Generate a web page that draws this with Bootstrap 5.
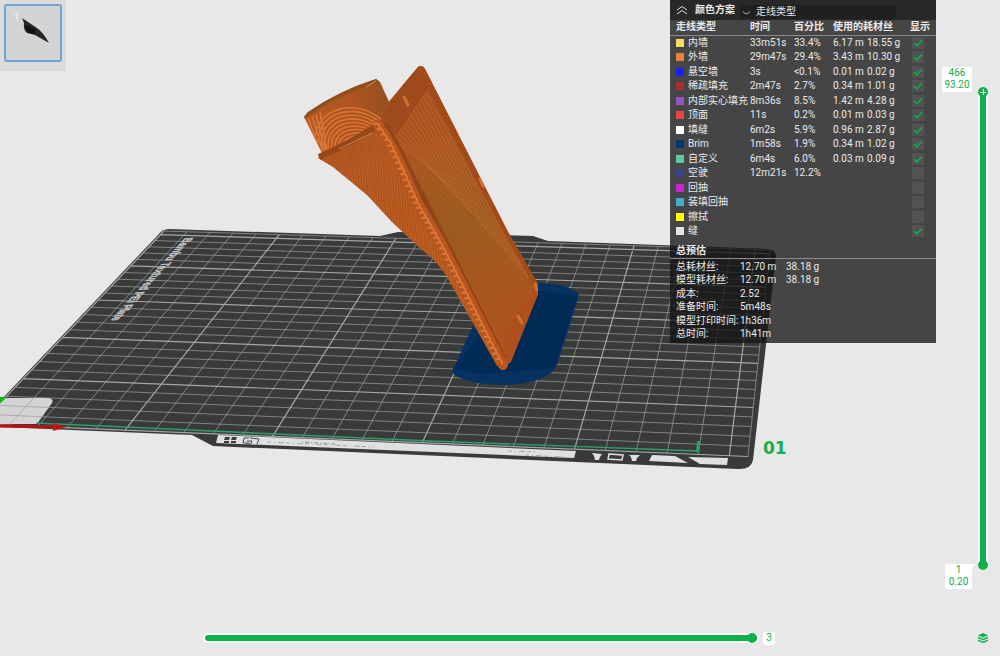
<!DOCTYPE html>
<html lang="zh-CN">
<head>
<meta charset="utf-8">
<meta name="viewport" content="width=device-width, initial-scale=1">
<title>切片预览</title>
<link href="https://cdn.jsdelivr.net/npm/bootstrap@5.3.0/dist/css/bootstrap.min.css" rel="stylesheet">
<style>
  :root { --accent: #0faf4b; }
  body { font-family: Roboto, "Noto Sans CJK SC", sans-serif; font-size: 10px; line-height: 12px; background: #e8e8e8; }
  .scene { z-index: 0; }
  .workspace { display: grid; grid-template-columns: 1fr 266px 64px; grid-template-rows: 1fr 36px; min-height: 100vh; position: relative; z-index: 1; }

  .plate-list { background: #dbdbdb; width: 66px; height: 71px; padding: 4px; }
  .plate-btn { width: 58px; height: 58px; border: 2px solid #6ca4d8; border-radius: 3px; background: #d4d4d4; padding: 0; }
  .plate-no { top: 6px; left: 8px; color: #f4f4f4; font-size: 10px; line-height: 12px; }

  .legend { background: rgba(20,20,20,.77); color: #ebebeb; align-self: start; padding-bottom: 3px; }
  .legend-head { background: rgba(22,22,22,.6); height: 20px; padding: 2px 0 0 6px; }
  .fold-btn { width: 12px; height: 16px; color: #ddd; }
  .scheme-label { margin: 0 5px 0 7px; line-height: 16px; }
  .scheme-select { width: 156px; height: 14px; padding: 0 0 0 16px; border: 0; border-radius: 0; color: #e6e6e6; font-size: 10px; line-height: 14px; margin-top: 3px;
    background: #202020 url("data:image/svg+xml,%3Csvg xmlns='http://www.w3.org/2000/svg' viewBox='0 0 10 6'%3E%3Cpath d='M1 1.5Q5 6 9 1.5' fill='none' stroke='%23ccc'/%3E%3C/svg%3E") 2px 5px / 9px 6px no-repeat; }
  .legend table { table-layout: fixed; width: 100%; margin: 0; border-collapse: collapse; }
  .legend th, .legend td { padding: 0; white-space: nowrap; vertical-align: middle; }
  .types thead tr { height: 15px; border-bottom: 1px solid #8b8b8b; }
  .types tbody tr { height: 15px; line-height: 14px; }
  .types tbody tr:nth-child(even) { height: 14px; }
  .legend tr > :first-child { padding-left: 6px; }
  .legend tbody th { font-weight: 400; }
  .swatch { width: 8px; height: 8px; margin-right: 4px; flex: none; }
  .show-box { appearance: none; display: block; width: 12px; height: 12px; margin: 0 0 0 2px; background: #525252; }
  .show-box:checked { background: #525252 url("data:image/svg+xml,%3Csvg xmlns='http://www.w3.org/2000/svg' viewBox='0 0 12 12'%3E%3Cpath d='M2 6.2 4.8 8.8 10 3.4' fill='none' stroke='%2316a54a' stroke-width='1.8'/%3E%3C/svg%3E"); }
  .totals-title { font-size: 10px; line-height: 14px; height: 15px; margin: 6px 0 0; padding-left: 6px; border-bottom: 1px solid #8b8b8b; }
  .totals tr { height: 14px; line-height: 13px; }
  .totals tr:nth-child(even) { height: 13px; }

  .layers { padding: 67px 12px 31px 6px; }
  .layer-tag { background: #fff; border-radius: 2px; color: var(--accent); width: 30px; height: 25px; position: relative; }
  .layer-tag.low { width: 27px; }
  .layer-tag.low::after { content: ""; position: absolute; left: 26px; top: 0; border-top: 5px solid #fff; border-right: 4px solid transparent; }
  .layer-rail { width: 10px; margin: 20px 0 19px; background: #fff; border-radius: 5px; }
  .layer-rail::before { content: ""; position: absolute; inset: 4px 2px; background: var(--accent); }
  .layer-rail input { appearance: none; writing-mode: vertical-lr; direction: rtl; position: absolute; inset: 0; width: 10px; height: 100%; margin: 0; background: none; pointer-events: none; }
  .layer-rail input::-webkit-slider-thumb, .step-range::-webkit-slider-thumb { -webkit-appearance: none; width: 10px; height: 10px; border: 0; border-radius: 50%; background: var(--accent); pointer-events: auto; }
  .layer-rail input.top-end::-webkit-slider-thumb { background: linear-gradient(#fff,#fff) center / 6px 1px no-repeat, linear-gradient(#fff,#fff) center / 1px 6px no-repeat, var(--accent); }

  .steps { grid-column: 1 / 3; grid-row: 2; margin: 0 161px 0 203px; }
  .step-range { appearance: none; height: 10px; border-radius: 5px; background: var(--accent); border: 2px solid #fff; min-width: 0; }
  .step-tag { background: #fff; color: var(--accent); width: 12px; height: 13px; border-radius: 2px; margin-left: 4px; }
  .layers-btn { color: var(--accent); grid-column: 3; margin-right: 12px; }
</style>
</head>
<body>
<main class="position-relative min-vh-100 overflow-hidden">
  <svg class="scene position-absolute top-0 start-0 w-100 h-100" viewBox="0 0 1000 656" preserveAspectRatio="xMidYMid slice" role="img" aria-label="模型预览">
    <defs>
      <linearGradient id="face" x1="400" y1="100" x2="510" y2="350" gradientUnits="userSpaceOnUse">
        <stop offset="0" stop-color="#a9501f"/><stop offset=".25" stop-color="#a85720"/><stop offset=".5" stop-color="#9b5a1f"/><stop offset=".75" stop-color="#a8581f"/><stop offset="1" stop-color="#b0521f"/>
      </linearGradient>
      <linearGradient id="wing" x1="320" y1="150" x2="470" y2="300" gradientUnits="userSpaceOnUse">
        <stop offset="0" stop-color="#b95a22"/><stop offset="1" stop-color="#c56122"/>
      </linearGradient>
      <linearGradient id="tube" x1="305" y1="120" x2="388" y2="110" gradientUnits="userSpaceOnUse">
        <stop offset="0" stop-color="#b55a22"/><stop offset=".6" stop-color="#ad5420"/><stop offset="1" stop-color="#96511f"/>
      </linearGradient>
      <clipPath id="tubeClip"><path d="M304 117 308 112Q338 91 376 79L380 82 390 104 388 125 345 150 322 153Z"/></clipPath>
      <clipPath id="wingClip"><path d="M318 158 322 152Q352 139 378 122L392 140 448 247 500 362 497 366 477 330 461 302 447 277Q438 262 422 250L393 223 367 195 333 167Z"/></clipPath>
      <clipPath id="faceClip"><path d="M386 105 418 67Q422 64 425 69L507 230 538 284V294L511 362 503 367 448 247 392 137 380 124Z"/></clipPath>
    </defs>
    <path fill="#393b3b" d="M0 401 158 235Q162 229 169 229L380 236 398 232 533 236 548 241 768 249Q776 250 776 256L753 460Q751 470 737 469L213 446 192 435 0 427Z"/>
    <path fill="#d3d4d4" d="M-2 398H49Q54 399 52 403L37 424H-2Z"/>
    <path id="gridFine" fill="none" stroke="#9c9e9e" stroke-width=".9" opacity=".8"/>
    <path id="gridBold" fill="none" stroke="#b0b2b2" stroke-width="1.2" opacity=".9"/>
    <text transform="translate(185 238) rotate(132) skewX(45)" font-family="Liberation Sans Narrow, Liberation Sans, sans-serif" font-size="9" font-weight="700" fill="#c2c3c3" stroke="#c2c3c3" stroke-width=".4">Bambu Textured PEI Plate</text>
    <path fill="#dfe1e1" d="M218 435 576 451 574 458 216 443Z"/>
    <path fill="#3c3e3e" d="M225 437h5l-1 3h-5zM232 437h5l-1 3h-5zM224 441h5v2h-5zM231 441h5v2h-5z"/>
    <path fill="none" stroke="#4a4c4c" d="M249 438l-5 0-1 5 6 0M250 438l9 1-2 5M247 441l5 0-1 3-5 0"/>
    <path fill="none" stroke="#a6a9a9" stroke-dasharray="4 3 1 3 6 2" d="M267 442 374 447M508 451 538 452M525 455 562 457"/>
    <path fill="none" stroke="#8a8d8d" stroke-dasharray="1 2 4 2" d="M302 442 335 444"/>
    <path fill="#dfe1e1" d="M592 453l10 1-2 3-1 3h-4l-1-4zM629 455l11 0-3 3-1 3h-4l-1-4zM652 455 675 456 688 463 649 461ZM688 457 728 458 727 465 700 464Z"/>
    <path fill="none" stroke="#dfe1e1" stroke-width="1.5" d="M609 454l14 1-1 5-14-1z"/>
    <path fill="none" stroke="#2d9f6b" stroke-width="1.4" d="M36 423 430 441 698 451"/>
    <path fill="#2d9f6b" d="M697 441h4l-2 11h-3z"/>
    <path stroke="#bd0f12" stroke-width="3" d="M-2 426 57 427"/><path fill="#c51416" d="M53 423 66 427 53 431Z"/>
    <path fill="#10b417" d="M-2 397 7 397-2 405Z"/>
    <text x="763" y="454" font-family="DejaVu Sans, sans-serif" font-weight="700" font-size="17" fill="#16ad4d">01</text>
    <path fill="#053260" d="M452 371 473 326 538 283Q570 284 579 294L577 302 557 365Q552 377 530 382 503 388 473 382 453 377 452 371Z"/>
    <path fill="#002850" opacity=".7" d="M456 368 482 330 536 290 577 296 555 368Q515 372 480 374Z"/>
    <g clip-path="url(#tubeClip)"><path fill="url(#tube)" d="M290 70h110v90H290z"/><path id="rings" fill="none" stroke="#e27a3a" stroke-width="1.6" opacity=".85"/><path d="M304 117Q335 94 378 80" fill="none" stroke="#8f501f" stroke-width="4"/><path d="M366 87 376 81" stroke="#d58a58" stroke-width="1"/></g>
    <g clip-path="url(#faceClip)">
      <path fill="url(#face)" d="M375 60h170v315H375z"/>
      <path id="faceLines" fill="none" stroke="#cd7034" stroke-width="1" opacity=".6"/>
      <path fill="#9f4a1c" d="M376 124 418 62 432 82 396 135Z"/>
      <path fill="none" stroke="#a34a1b" stroke-width="7" d="M420 66 508 233 540 290"/>
      <path fill="#ad501e" d="M538 284 505 332 503 370 542 294Z"/>
      <path id="speckles" fill="none" stroke="#b47a2c" stroke-width="1" opacity=".5"/>
      <path fill="none" stroke="#d4702f" stroke-width="3" stroke-linecap="round" d="M404 97l4 8M518 316l4 7M480 179l3 7M535 284l2 6"/>
    </g>
    <g clip-path="url(#wingClip)"><path fill="url(#wing)" d="M310 115h200v260H310z"/><path id="wingLines" fill="none" stroke="#97491d" stroke-width=".8" opacity=".75"/></g>
    <path fill="none" stroke="#984719" stroke-width="6" d="M319 157Q352 143 379 124"/>
    <path fill="none" stroke="#bd8753" stroke-width="1" d="M339 149 372 133"/>
    <path fill="none" stroke="#914319" stroke-width="6" d="M385 125 398 148 448 247 504 360"/>
    <path fill="none" stroke="#b7571f" stroke-width="10" stroke-linecap="round" d="M378 125Q388 138 400 163L418 203 441 243 461 282 480 320 503 365"/>
    <path id="ridge" fill="none" stroke="#de7636" stroke-width="2" stroke-linecap="round"/>
  </svg>

  <div class="workspace">
    <nav class="plate-list" aria-label="盘列表">
      <button class="plate-btn btn position-relative d-block" type="button" aria-label="盘 1">
        <span class="plate-no position-absolute">1</span>
        <svg class="d-block" width="54" height="54" viewBox="0 0 54 54" aria-hidden="true"><path fill="#252626" d="M16 12 31 22Q37 26 43 37L29 29 21 27Q17 24 18 17Z"/><path fill="#111" d="M19 19 30 23 28 28 21 26Z"/></svg>
      </button>
    </nav>

    <section class="legend" aria-label="颜色方案">
      <div class="legend-head d-flex align-items-start">
        <button class="fold-btn btn p-0 border-0 d-flex align-items-center" type="button" aria-label="折叠">
          <svg width="12" height="10" viewBox="0 0 12 10" fill="none" stroke="currentColor"><path d="M1 5 6 1.5 11 5M1 9 6 5.500 11 9"/></svg>
        </button>
        <label class="scheme-label fw-bold" for="scheme">颜色方案</label>
        <select class="scheme-select form-select" id="scheme"><option>走线类型</option><option>层高</option><option>线宽</option></select>
      </div>
      <table class="types">
        <colgroup><col style="width:80px"><col style="width:44px"><col style="width:39px"><col style="width:34px"><col style="width:43px"><col style="width:26px"></colgroup>
        <thead><tr><th>走线类型</th><th>时间</th><th>百分比</th><th colspan="2">使用的耗材丝</th><th>显示</th></tr></thead>
        <tbody id="typeRows"></tbody>
      </table>
      <h2 class="totals-title fw-bold">总预估</h2>
      <table class="totals">
        <colgroup><col style="width:70px"><col style="width:46px"><col></colgroup>
        <tbody>
          <tr><th>总耗材丝:</th><td>12.70 m</td><td>38.18 g</td></tr>
          <tr><th>模型耗材丝:</th><td>12.70 m</td><td>38.18 g</td></tr>
          <tr><th>成本:</th><td>2.52</td><td></td></tr>
          <tr><th>准备时间:</th><td>5m48s</td><td></td></tr>
          <tr><th>模型打印时间:</th><td>1h36m</td><td></td></tr>
          <tr><th>总时间:</th><td>1h41m</td><td></td></tr>
        </tbody>
      </table>
    </section>

    <aside class="layers d-flex justify-content-between">
      <div class="d-flex flex-column justify-content-between align-items-end">
        <output class="layer-tag text-center" for="layerTop">466<br>93.20</output>
        <output class="layer-tag low text-center" for="layerLow">1<br>0.20</output>
      </div>
      <div class="layer-rail position-relative">
        <input class="top-end" id="layerTop" type="range" min="1" max="466" value="466" aria-label="最高层">
        <input id="layerLow" type="range" min="1" max="466" value="1" aria-label="最低层">
      </div>
    </aside>

    <div class="steps d-flex align-items-center">
      <input class="step-range flex-grow-1" id="step" type="range" min="0" max="3" value="3" aria-label="步骤">
      <output class="step-tag text-center" for="step">3</output>
    </div>
    <button class="layers-btn btn border-0 p-0 d-flex align-items-center justify-content-end" type="button" aria-label="图层">
      <svg width="10" height="10" viewBox="0 0 10 10" fill="currentColor"><path d="M5 0 10 2.300 5 4.600 0 2.300Z"/><path d="M0 3.600 5 5.700 10 3.600V5.200L5 7.300 0 5.200ZM0 6.400 5 8.500 10 6.400V7.900L5 10 0 7.900Z"/></svg>
    </button>
  </div>
</main>
<script src="https://cdn.jsdelivr.net/npm/bootstrap@5.3.0/dist/js/bootstrap.bundle.min.js"></script>
<script>
  const types = [
    ['#f9dc5a', '内墙', '33m51s', '33.4%', '6.17 m', '18.55 g', 1],
    ['#e8823c', '外墙', '29m47s', '29.4%', '3.43 m', '10.30 g', 1],
    ['#1c22f2', '悬空墙', '3s', '<0.1%', '0.01 m', '0.02 g', 1],
    ['#a8302a', '稀疏填充', '2m47s', '2.7%', '0.34 m', '1.01 g', 1],
    ['#9455c4', '内部实心填充', '8m36s', '8.5%', '1.42 m', '4.28 g', 1],
    ['#e54545', '顶面', '11s', '0.2%', '0.01 m', '0.03 g', 1],
    ['#ffffff', '填缝', '6m2s', '5.9%', '0.96 m', '2.87 g', 1],
    ['#00386e', 'Brim', '1m58s', '1.9%', '0.34 m', '1.02 g', 1],
    ['#5dcb9c', '自定义', '6m4s', '6.0%', '0.03 m', '0.09 g', 1],
    ['#38478f', '空驶', '12m21s', '12.2%', '', '', 0],
    ['#cd22d6', '回抽', '', '', '', '', 0],
    ['#4aa8cc', '装填回抽', '', '', '', '', 0],
    ['#fcfc04', '擦拭', '', '', '', '', 0],
    ['#e6e6e6', '缝', '', '', '', '', 1]
  ];
  document.getElementById('typeRows').innerHTML = types.map(([color, name, ...rest], i) => {
    const shown = rest.pop();
    const cells = rest.map(t => `<td>${t.replace('<', '&lt;')}</td>`).join('');
    return `<tr><th><label class="d-flex align-items-center" for="show${i}"><span class="swatch" style="background:${color}"></span>${name}</label></th>${cells}<td><input class="show-box" type="checkbox" id="show${i}" ${shown ? 'checked' : ''}></td></tr>`;
  }).join('');

  const draw = (id, d) => document.getElementById(id).setAttribute('d', d);

  // Bed coordinates (mm, 256 x 256) projected onto the view
  const bed = 256, c = [[-20, 424], [748, 456.5], [770, 250], [164, 231]];
  const dx1 = c[1][0]-c[2][0], dx2 = c[3][0]-c[2][0], sx = c[0][0]-c[1][0]+c[2][0]-c[3][0];
  const dy1 = c[1][1]-c[2][1], dy2 = c[3][1]-c[2][1], sy = c[0][1]-c[1][1]+c[2][1]-c[3][1];
  const det = dx1*dy2 - dx2*dy1, g = (sx*dy2 - dx2*sy)/det, h = (dx1*sy - sx*dy1)/det;
  const project = (u, v) => {
    u /= bed; v /= bed;
    const w = g*u + h*v + 1;
    return [((c[1][0]-c[0][0]+g*c[1][0])*u + (c[3][0]-c[0][0]+h*c[3][0])*v + c[0][0])/w,
            ((c[1][1]-c[0][1]+g*c[1][1])*u + (c[3][1]-c[0][1]+h*c[3][1])*v + c[0][1])/w].map(n => n.toFixed(1)).join(' ');
  };
  let fine = '', bold = '';
  for (let i = 0; i <= 260; i += 10) {
    const p = Math.min(i, bed);
    const line = `M${project(p, 0)}L${project(p, bed)}M${project(0, p)}L${project(bed, p)}`;
    if (i % 50) fine += line; else bold += line;
  }
  draw('gridFine', fine); draw('gridBold', bold);

  // Printed layer lines
  let rings = '', wing = '', face = '', ridge = '', dots = '';
  for (let k = 0; k < 9; k++) {
    const r = 4 + k*4.5;
    rings += `M${346 - r*.75} ${156 - r*.1}C${342 - r*.9} ${144 - r*.8} ${346 + r*.1} ${142 - r*1.15} ${358 + r*.5} ${137 - r*.5}S${372 + r*.4} ${138 - r*.2} ${384 + r*.2} ${130}`;
  }
  for (let k = 0; k < 4; k++) rings += `M${308 + k*4} ${118 - k*2}L${322 + k*2} 156`;
  draw('rings', rings);
  for (let i = 0; i < 75; i++) wing += `M${318 + i*2.6} 110L${345 + i*2.6} 380`;
  draw('wingLines', wing);
  for (let i = 0; i < 15; i++) face += `M${428 - i*2.6} ${88 + i*3.6}L${535 - i*7} ${286 - i*8}`;
  draw('faceLines', face);
  const pts = [[378,124],[389,140],[400,163],[418,203],[441,243],[461,282],[480,320],[503,365]];
  for (let k = 0; k < pts.length - 1; k++) {
    const [a, b] = [pts[k], pts[k+1]], n = Math.round(Math.hypot(b[0]-a[0], b[1]-a[1]) / 6);
    for (let j = 0; j < n; j++) {
      const x = a[0] + (b[0]-a[0])*j/n, y = a[1] + (b[1]-a[1])*j/n;
      ridge += `M${(x-4).toFixed(1)} ${y.toFixed(1)}q5 -2 6 4`;
    }
  }
  draw('ridge', ridge);
  for (let i = 0; i < 130; i++) {
    const t = (i*37 % 130)/130, s = (i*53 % 97)/97;
    dots += `M${(422 + t*44 + s*32).toFixed(1)} ${(178 + t*75 - s*10).toFixed(1)}l2 1`;
  }
  draw('speckles', dots);
</script>
</body>
</html>
